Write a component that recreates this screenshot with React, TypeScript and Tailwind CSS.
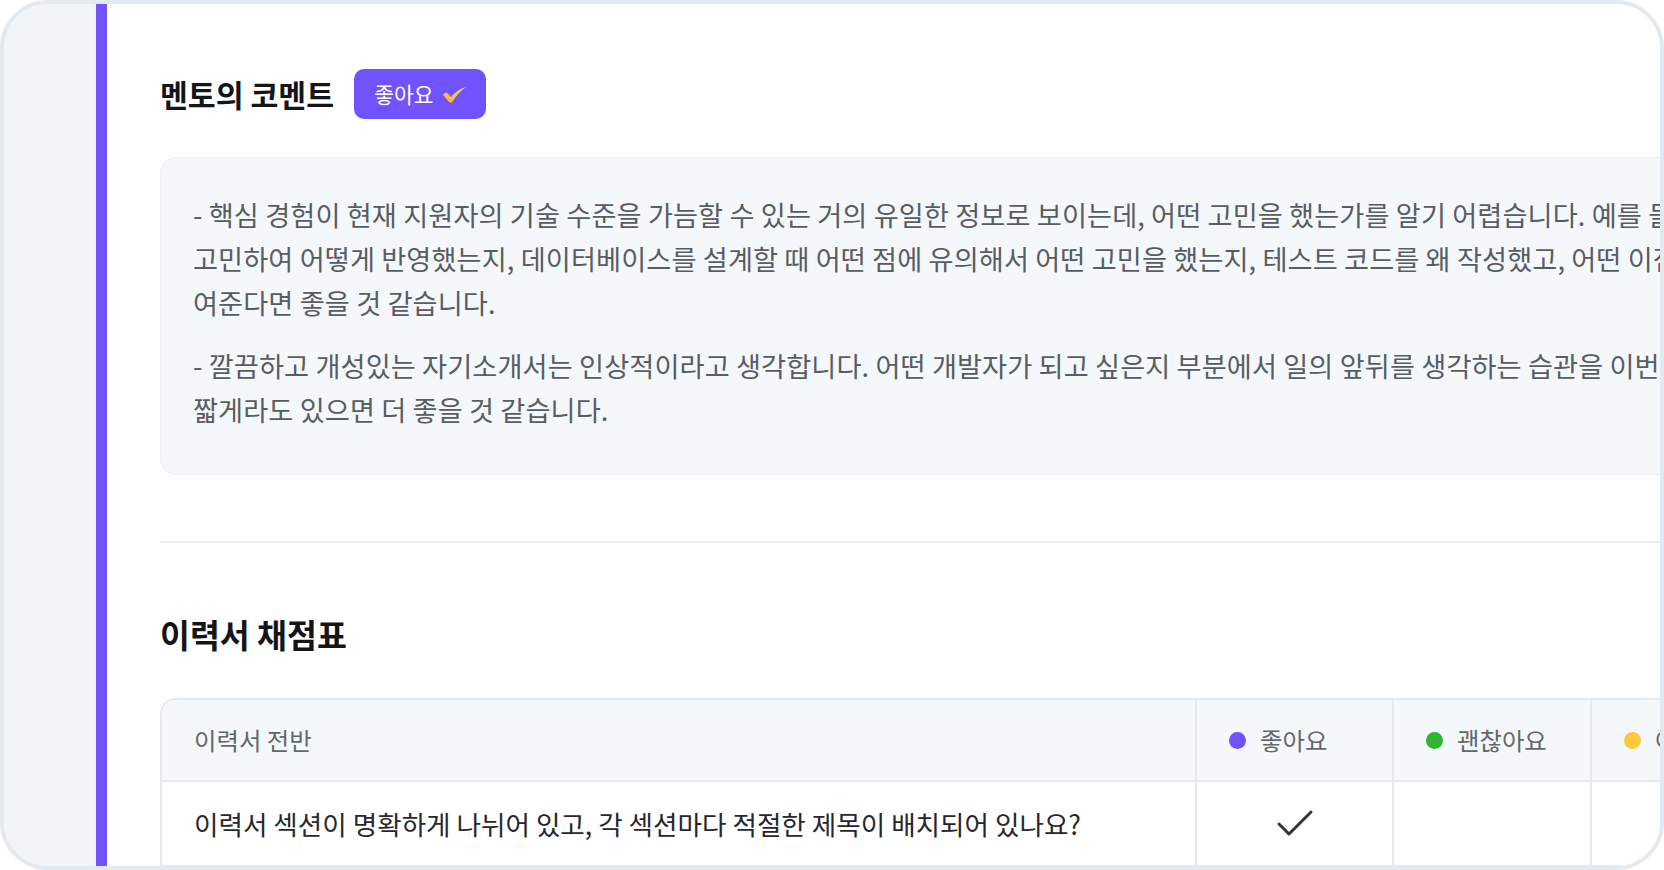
import React from 'react';
import { Check } from 'lucide-react';

const font = { fontFamily: '"Noto Sans CJK KR", "Noto Sans", sans-serif' };

function BadgeCheck() {
  return (
    <svg width="25" height="17" viewBox="0 0 24 16" aria-hidden="true">
      <defs>
        <linearGradient id="chk" x1="0" y1="1" x2="1" y2="0">
          <stop offset="0" stopColor="#f2b535" />
          <stop offset="1" stopColor="#fcd65c" />
        </linearGradient>
      </defs>
      <path
        d="M1 8.4Q2.6 5.4 5 6.6L8.6 10.4Q14 4 23.8 0.4Q15.6 5.8 10.2 14.8Q8.6 17 6.6 15Q3.8 11.4 1 8.4Z"
        fill="url(#chk)"
      />
    </svg>
  );
}

function Dot({ color }: { color: string }) {
  return <span className={`inline-block w-[17px] h-[17px] rounded-full shrink-0 ${color}`} />;
}

const grades = [
  { label: '좋아요', color: 'bg-[#7152ff]' },
  { label: '괜찮아요', color: 'bg-[#2fb52f]' },
  { label: '아쉬워요', color: 'bg-[#ffc93c]' },
];

const rows = [
  { q: '이력서 섹션이 명확하게 나뉘어 있고, 각 섹션마다 적절한 제목이 배치되어 있나요?', pick: 0 },
  { q: '이력서의 분량이 적절하고, 핵심 내용이 한눈에 들어오나요?', pick: 1 },
];

export default function App() {
  return (
    <div className="w-[1664px] h-[870px] bg-white" style={font}>
      <div className="w-full h-full rounded-[48px] border-4 border-[#e3e9f0] overflow-hidden flex">
        {/* left rail */}
        <div className="w-[92px] shrink-0 bg-[#f1f5f9]" />
        <div className="w-[11px] shrink-0 bg-[#7152ff]" />

        {/* content */}
        <div className="flex-1 min-w-0 bg-white pl-[53px] pt-[65px]">
          <div className="w-[1626px]">
            <div className="flex items-center gap-5 h-[50px]">
              <h2 className="text-[30.3px] leading-[40px] font-bold text-[#141518]">멘토의 코멘트</h2>
              <span className="h-[50px] w-[132px] rounded-[10px] bg-[#7152ff] flex items-center pl-[20px] gap-[9px] text-white text-[21.5px]">
                좋아요
                <BadgeCheck />
              </span>
            </div>

            <div className="mt-[38px] rounded-2xl border border-[#edf1f4] bg-[#f5f8fa] pl-8 pt-[34px] pb-[43px] text-[27.2px] tracking-[0.004em] leading-[44px] text-[#585c63] whitespace-nowrap">
              <p>
                - 핵심 경험이 현재 지원자의 기술 수준을 가늠할 수 있는 거의 유일한 정보로 보이는데, 어떤 고민을 했는가를 알기 어렵습니다. 예를 들어 API를 설계할 때 어떤 점을
                <br />
                고민하여 어떻게 반영했는지, 데이터베이스를 설계할 때 어떤 점에 유의해서 어떤 고민을 했는지, 테스트 코드를 왜 작성했고, 어떤 이점이 있었는지 등을 보
                <br />
                여준다면 좋을 것 같습니다.
              </p>
              <p className="mt-[19px]">
                - 깔끔하고 개성있는 자기소개서는 인상적이라고 생각합니다. 어떤 개발자가 되고 싶은지 부분에서 일의 앞뒤를 생각하는 습관을 이번 경험에서 어떻게 적용했는지
                <br />
                짧게라도 있으면 더 좋을 것 같습니다.
              </p>
            </div>

            <div className="mt-[66px] h-[2px] bg-[#e9eef2]" />

            <h2 className="mt-[71px] text-[32.5px] leading-[40px] font-bold text-[#141518]">이력서 채점표</h2>

            {/* score table */}
            <div className="mt-[44px] rounded-t-2xl border-2 border-b-0 border-[#e5eaf0] overflow-hidden">
              <div className="grid grid-cols-[1033px_197px_198px_197px] h-[80px] bg-[#f5f8fa] text-[24.4px] text-[#63676d]">
                <div className="flex items-center pl-8">이력서 전반</div>
                {grades.map((g) => (
                  <div key={g.label} className="flex items-center gap-[14px] pl-[32px] border-l-2 border-[#e5eaf0] whitespace-nowrap">
                    <Dot color={g.color} />
                    {g.label}
                  </div>
                ))}
              </div>
              {rows.map((r) => (
                <div key={r.q} className="grid grid-cols-[1033px_197px_198px_197px] h-[85px] border-t-2 border-[#e5eaf0] bg-white">
                  <div className="flex items-center pl-8 text-[26.6px] text-[#25272b]">{r.q}</div>
                  {grades.map((g, i) => (
                    <div key={g.label} className="flex items-center justify-center border-l-2 border-[#e5eaf0]">
                      {i === r.pick && <Check size={48} strokeWidth={1.5} color="#333538" />}
                    </div>
                  ))}
                </div>
              ))}
            </div>
          </div>
        </div>
      </div>
    </div>
  );
}
